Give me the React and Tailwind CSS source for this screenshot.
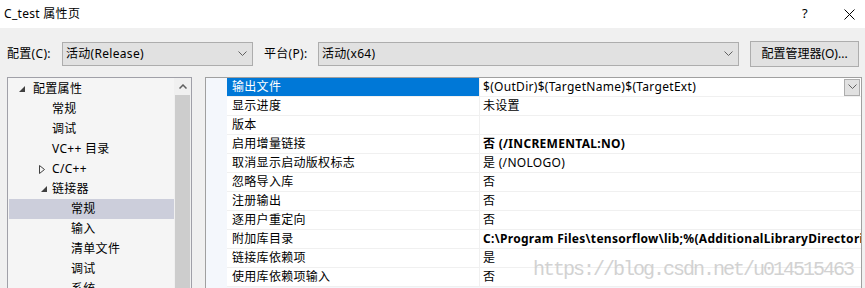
import React from "react";

const FONT = { fontFamily: '"Noto Sans", "Noto Sans CJK SC", sans-serif' };

function Chevron({ className = "" }) {
  return (
    <svg width="9" height="6" viewBox="0 0 9 6" className={className}>
      <polyline points="0.5,0.5 4.5,4.5 8.5,0.5" fill="none" stroke="#606060" strokeWidth="1" />
    </svg>
  );
}

function FilledArrow() {
  return (
    <svg width="6" height="6" viewBox="0 0 6 6">
      <polygon points="6,0 6,6 0,6" fill="#404040" />
    </svg>
  );
}

function HollowArrow() {
  return (
    <svg width="6" height="9" viewBox="0 0 6 9">
      <polygon points="0.5,0.5 5.5,4.5 0.5,8.5" fill="none" stroke="#404040" strokeWidth="1" />
    </svg>
  );
}

const tree = [
  { label: "配置属性", text: 25, arrow: "filled", arrowX: 10 },
  { label: "常规", text: 44 },
  { label: "调试", text: 44 },
  { label: "VC++ 目录", text: 44 },
  { label: "C/C++", text: 44, arrow: "hollow", arrowX: 30 },
  { label: "链接器", text: 44, arrow: "filled", arrowX: 32 },
  { label: "常规", text: 63, selected: true },
  { label: "输入", text: 63 },
  { label: "清单文件", text: 63 },
  { label: "调试", text: 63 },
  { label: "系统", text: 63 },
];

const rows = [
  { name: "输出文件", value: "$(OutDir)$(TargetName)$(TargetExt)", selected: true },
  { name: "显示进度", value: "未设置" },
  { name: "版本", value: "" },
  { name: "启用增量链接", value: "否 (/INCREMENTAL:NO)", bold: true },
  { name: "取消显示启动版权标志", value: "是 (/NOLOGO)" },
  { name: "忽略导入库", value: "否" },
  { name: "注册输出", value: "否" },
  { name: "逐用户重定向", value: "否" },
  { name: "附加库目录", value: "C:\\Program Files\\tensorflow\\lib;%(AdditionalLibraryDirectories)", bold: true },
  { name: "链接库依赖项", value: "是" },
  { name: "使用库依赖项输入", value: "否" },
];

export default function App() {
  return (
    <div
      className="relative w-[865px] h-[288px] overflow-hidden bg-[#f0f0f0] text-[12px] tracking-[0.3px] text-black"
      style={FONT}
    >
      {/* Title bar */}
      <div className="h-[28px] bg-white flex items-center pl-[4px]">
        <span className="text-[12px]">C_test 属性页</span>
        <span className="ml-auto text-[13px] w-[10px] text-center mr-[34px]">?</span>
        <svg width="11" height="11" viewBox="0 0 11 11" className="mr-[10px]">
          <line x1="0.5" y1="0.5" x2="10.5" y2="10.5" stroke="#000" strokeWidth="1" />
          <line x1="10.5" y1="0.5" x2="0.5" y2="10.5" stroke="#000" strokeWidth="1" />
        </svg>
      </div>

      {/* Config row */}
      <div className="flex items-center pl-[7px] mt-[13px] h-[26px]">
        <span className="w-[55px] whitespace-nowrap">配置(C):</span>
        <div className="w-[191px] h-[24px] bg-[#e1e1e1] border border-[#adadad] flex items-center pl-[3px] pr-[5px]">
          <span>活动(Release)</span>
          <Chevron className="ml-auto" />
        </div>
        <span className="ml-[11px] w-[54px] whitespace-nowrap">平台(P):</span>
        <div className="w-[421px] h-[24px] bg-[#e1e1e1] border border-[#adadad] flex items-center pl-[3px] pr-[5px]">
          <span>活动(x64)</span>
          <Chevron className="ml-auto" />
        </div>
        <div className="ml-[11px] w-[109px] h-[26px] bg-[#e1e1e1] border border-[#adadad] flex items-center justify-center whitespace-nowrap tracking-normal">
          配置管理器(O)...
        </div>
      </div>

      {/* Panels */}
      <div className="flex pl-[7px] mt-[10px]">
        {/* Left tree */}
        <div className="w-[185px] h-[220px] bg-[#f5f5f5] border border-[#a0a0a8] flex">
          <div className="flex-1 pt-[1px] pl-[1px]">
            {tree.map((t, i) => (
              <div
                key={i}
                className={`relative h-[20px] flex items-center ${t.selected ? "bg-[#cccedb]" : ""}`}
              >
                {t.arrow && (
                  <span className="absolute flex items-center" style={{ left: t.arrowX }}>
                    {t.arrow === "filled" ? <FilledArrow /> : <HollowArrow />}
                  </span>
                )}
                <span style={{ paddingLeft: t.text - 1 }} className="whitespace-nowrap">
                  {t.label}
                </span>
              </div>
            ))}
          </div>
          <div className="w-[17px] bg-[#f0f0f0] flex flex-col">
            <div className="h-[17px] flex items-center justify-center">
              <svg width="8" height="5" viewBox="0 0 8 5">
                <polyline points="0.5,4.5 4,1 7.5,4.5" fill="none" stroke="#606060" strokeWidth="1.5" />
              </svg>
            </div>
            <div className="flex-1 mx-[1px] bg-[#cdcdcd]" />
          </div>
        </div>

        {/* Right grid */}
        <div className="ml-[13px] w-[657px] h-[220px] border border-[#a0a0a0] bg-[#f4f7fc] flex">
          <div className="w-[21px]" />
          <div className="flex-1 min-w-0 flex flex-col">
            {rows.map((r, i) => (
              <div key={i} className="flex h-[19px] border-b border-[#f0f0f0] bg-white">
                <div
                  className={`w-[253px] shrink-0 border-r border-[#f0f0f0] flex items-center pl-[5px] whitespace-nowrap ${
                    r.selected ? "bg-[#0078d7] text-white" : ""
                  }`}
                >
                  {r.name}
                </div>
                <div
                  className={`flex-1 min-w-0 flex items-center pl-[3px] whitespace-nowrap overflow-hidden ${
                    r.bold ? "font-bold" : ""
                  }`}
                >
                  <span>{r.value}</span>
                  {r.selected && (
                    <div className="ml-auto mr-[1px] w-[16px] h-[17px] bg-[#e1e1e1] border border-[#adadad] flex items-center justify-center shrink-0">
                      <Chevron />
                    </div>
                  )}
                </div>
              </div>
            ))}
          </div>
        </div>
      </div>

      {/* Watermark */}
      <div
        className="absolute left-[533px] top-[255px] text-[20px] tracking-[-2px] text-[#c8c8c8] opacity-80 whitespace-nowrap pointer-events-none"
        style={{ fontFamily: '"Liberation Mono", monospace' }}
      >
        https://blog.csdn.net/u014515463
      </div>
    </div>
  );
}
